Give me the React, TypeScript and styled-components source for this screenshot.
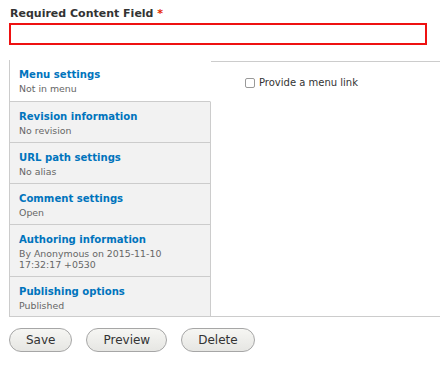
import { useState } from "react";
import styled, { createGlobalStyle } from "styled-components";

type Tab = {
  title: string;
  summary: string[];
};

const TABS: Tab[] = [
  { title: "Menu settings", summary: ["Not in menu"] },
  { title: "Revision information", summary: ["No revision"] },
  { title: "URL path settings", summary: ["No alias"] },
  { title: "Comment settings", summary: ["Open"] },
  {
    title: "Authoring information",
    summary: ["By Anonymous on 2015-11-10", "17:32:17 +0530"],
  },
  { title: "Publishing options", summary: ["Published"] },
];

const App = () => {
  const [selected, setSelected] = useState(0);
  const [menuLink, setMenuLink] = useState(false);

  return (
    <Page>
      <GlobalStyle />
      <Field>
        <Label htmlFor="required-field">
          Required Content Field <Star>*</Star>
        </Label>
        <TextInput id="required-field" type="text" />
      </Field>

      <VerticalTabs>
        <TabMenu>
          {TABS.map((tab, i) => (
            <TabItem
              key={tab.title}
              $selected={i === selected}
              onClick={() => setSelected(i)}
            >
              <TabTitle>{tab.title}</TabTitle>
              <TabSummary>
                {tab.summary.map((line) => (
                  <div key={line}>{line}</div>
                ))}
              </TabSummary>
            </TabItem>
          ))}
        </TabMenu>
        <TabPane>
          <CheckRow>
            <Checkbox
              type="checkbox"
              checked={menuLink}
              onChange={(e) => setMenuLink(e.target.checked)}
            />
            Provide a menu link
          </CheckRow>
        </TabPane>
      </VerticalTabs>

      <Actions>
        <Button>Save</Button>
        <Button>Preview</Button>
        <Button>Delete</Button>
      </Actions>
    </Page>
  );
};

const GlobalStyle = createGlobalStyle`
  body {
    margin: 0;
    background: #ffffff;
    font-family: "DejaVu Sans", Verdana, sans-serif;
    color: #333333;
  }
`;

const Page = styled.div`
  padding: 6px 0 0 9px;
  overflow: hidden;
`;

const Field = styled.div`
  display: flex;
  flex-direction: column;
`;

const Label = styled.label`
  display: block;
  margin-left: 1px;
  font-size: 11px;
  font-weight: bold;
  line-height: 15px;
  color: #333333;
  margin-bottom: 2px;
`;

const Star = styled.span`
  color: #e62600;
`;

const TextInput = styled.input`
  box-sizing: border-box;
  width: 418px;
  height: 22px;
  margin: 0;
  border: 2px solid #ee1111;
  background: #ffffff;
  outline: none;
`;

const VerticalTabs = styled.div`
  display: flex;
  margin-top: 15px;
`;

const TabMenu = styled.ul`
  width: 201px;
  flex: none;
  margin: 0;
  padding: 0;
  list-style: none;
  border-left: 1px solid #cccccc;
  border-bottom: 1px solid #cccccc;
`;

const TabItem = styled.li<{ $selected: boolean }>`
  padding: 7px 10px 6px 9px;
  background: ${(p) => (p.$selected ? "#ffffff" : "#f2f2f2")};
  border-right: 1px solid ${(p) => (p.$selected ? "transparent" : "#cccccc")};
  border-bottom: 1px solid #cccccc;
  cursor: pointer;
  &:first-child {
    padding-bottom: 7px;
  }
  &:last-child {
    border-bottom: none;
    padding-bottom: 5px;
  }
`;

const TabTitle = styled.div`
  font-size: 10.1px;
  font-weight: bold;
  line-height: 16px;
  color: #0074bd;
`;

const TabSummary = styled.div`
  font-size: 9.4px;
  line-height: 11px;
  color: #666666;
`;

const TabPane = styled.div`
  flex: 1;
  border-top: 1px solid #cccccc;
  border-bottom: 1px solid #cccccc;
  margin-top: 1px;
  padding: 15px 0 0 34px;
`;

const CheckRow = styled.label`
  display: flex;
  align-items: center;
  gap: 4px;
  font-size: 10px;
  color: #333333;
`;

const Checkbox = styled.input`
  appearance: none;
  width: 10px;
  height: 10px;
  margin: 0;
  border: 1px solid #999999;
  border-radius: 2px;
  background: #ffffff;
`;

const Actions = styled.div`
  display: flex;
  gap: 14px;
  margin-top: 11px;
`;

const Button = styled.button`
  height: 24px;
  padding: 0 16px;
  border: 1px solid #a6a6a6;
  border-radius: 20em;
  background: linear-gradient(to bottom, #f6f6f3, #e6e6e3);
  font-family: "DejaVu Sans", Verdana, sans-serif;
  font-size: 12px;
  color: #333333;
  cursor: pointer;
`;

export default App;
